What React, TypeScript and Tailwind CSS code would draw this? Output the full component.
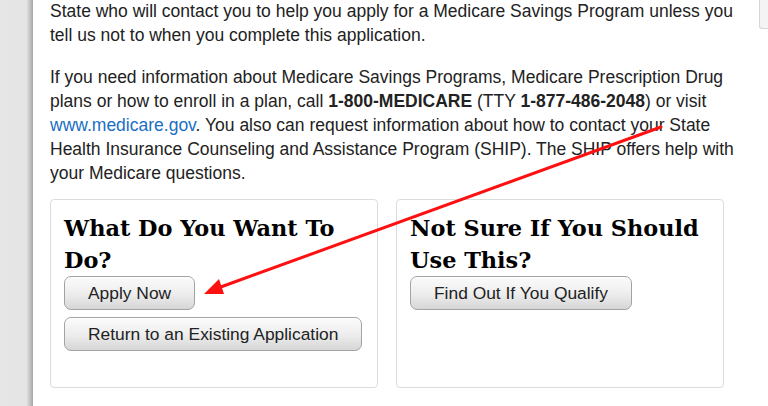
import React from 'react';

function GrayButton({ children }: { children: React.ReactNode }) {
  return (
    <button className="h-[34px] whitespace-nowrap rounded-[7px] border border-[#a3a3a3] bg-gradient-to-b from-[#fbfbfb] via-[#eeeeee] to-[#d6d6d6] px-[23px] text-[17.4px] leading-[32px] text-[#222] shadow-[inset_0_1px_0_#fff]">
      {children}
    </button>
  );
}

function Card({ title, children }: { title: React.ReactNode; children: React.ReactNode }) {
  return (
    <div className="h-[189px] w-[328px] shrink-0 rounded-[4px] border border-[#dcdcdc] bg-white px-[13px] pt-[12px]">
      <h2 className="font-['Georgia','DejaVu_Serif',serif] text-[22.4px] font-bold leading-[32px] text-black">
        {title}
      </h2>
      <div className="flex flex-col items-start gap-[7px]">{children}</div>
    </div>
  );
}

export default function App() {
  return (
    <div className="relative flex h-[406px] w-[768px] overflow-hidden bg-white font-['Liberation_Sans',Arial,sans-serif]">
      {/* left gutter with shadow */}
      <div className="h-full w-[33px] shrink-0 bg-gradient-to-r from-[#e6e6e6] via-[#e4e4e4] via-80% to-[#a8a8a8]" />

      <main className="w-[710px] shrink-0 pl-[17px] text-[17.5px] leading-[24px] text-[#222]">
        <p className="-mt-[1px]">
          State who will contact you to help you apply for a Medicare Savings Program unless you tell us not to
          when you complete this application.
        </p>
        <p className="mt-[18px]">
          If you need information about Medicare Savings Programs, Medicare Prescription Drug plans or how to
          enroll in a plan, call <b>1-800-MEDICARE</b> (TTY <b>1-877-486-2048</b>) or visit{' '}
          <a className="text-[#1a6fc4]">www.medicare.gov</a>. You also can request information about how to
          contact your State Health Insurance Counseling and Assistance Program (SHIP). The SHIP offers help with
          your Medicare questions.
        </p>

        <div className="mt-[14px] flex gap-[18px]">
          <Card title={<>What Do You Want To Do?</>}>
            <GrayButton>Apply Now</GrayButton>
            <GrayButton>Return to an Existing Application</GrayButton>
          </Card>
          <Card title={<>Not Sure If You Should Use This?</>}>
            <GrayButton>Find Out If You Qualify</GrayButton>
          </Card>
        </div>
      </main>

      {/* right side widget edge */}
      <div className="ml-auto h-[29px] w-[9px] shrink-0 rounded-bl-[3px] border-b border-l border-[#d6d6d6] bg-[#f4f4f4]" />

      {/* annotation arrow */}
      <svg className="pointer-events-none absolute left-0 top-0" width="768" height="406" viewBox="0 0 768 406">
        <line x1="661" y1="127" x2="218" y2="288" stroke="#ff1010" strokeWidth="3" strokeLinecap="round" />
        <polygon points="204,294 219,279 224,294" fill="#ff1010" />
      </svg>
    </div>
  );
}
